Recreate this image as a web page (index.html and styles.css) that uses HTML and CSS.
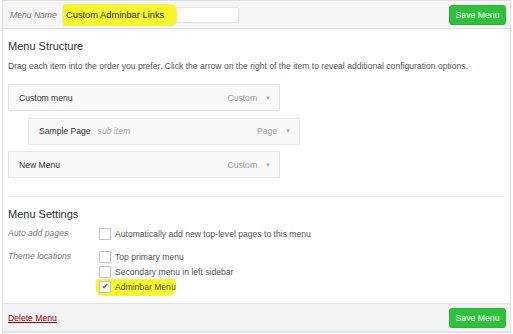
FILE: index.html
```html
<!DOCTYPE html>
<html lang="en">
<head>
<meta charset="UTF-8">
<meta name="viewport" content="width=device-width, initial-scale=1.0">
<title>Edit Menus</title>
<link rel="stylesheet" href="styles.css">
</head>
<body>

<div class="frame">
    <div class="header">
        <label class="name-label">Menu Name</label>
        <div class="name-input">
            <span class="marker">Custom Adminbar Links</span>
        </div>
        <button class="save">Save Menu</button>
    </div>

    <div class="body">
        <h3>Menu Structure</h3>
        <p class="desc">Drag each item into the order you prefer. Click the arrow on the right of the item to reveal additional configuration options.</p>

        <ul class="items">
            <li class="item">
                <span class="title">Custom menu</span>
                <span class="type">Custom</span>
                <span class="arrow">&#9660;</span>
            </li>
            <li class="item sub">
                <span class="title">Sample Page</span>
                <span class="subnote">sub item</span>
                <span class="type">Page</span>
                <span class="arrow">&#9660;</span>
            </li>
            <li class="item">
                <span class="title">New Menu</span>
                <span class="type">Custom</span>
                <span class="arrow">&#9660;</span>
            </li>
        </ul>

        <div class="settings">
            <h3>Menu Settings</h3>
            <div class="row">
                <div class="label">Auto add pages</div>
                <div class="opts">
                    <div class="opt"><span class="box"></span>Automatically add new top-level pages to this menu</div>
                </div>
            </div>
            <div class="row">
                <div class="label">Theme locations</div>
                <div class="opts">
                    <div class="opt"><span class="box"></span>Top primary menu</div>
                    <div class="opt"><span class="box"></span>Secondary menu in left sidebar</div>
                    <div class="opt marked"><span class="box checked">&#10004;</span>Adminbar Menu</div>
                </div>
            </div>
        </div>
    </div>

    <div class="footer">
        <a href="#" class="delete">Delete Menu</a>
        <button class="save">Save Menu</button>
    </div>
</div>

</body>
</html>
```

FILE: styles.css
```css
body {
    margin: 0;
    padding: 0;
    background: #fff;
    font-family: "Liberation Sans", Arial, sans-serif;
    font-size: 8.6px;
    color: #333;
}

.frame {
    box-sizing: border-box;
    width: 509px;
    height: 333px;
    margin-left: 2px;
    border: 1px solid #dfdfdf;
    border-bottom: 2px solid #dde4ea;
    display: flex;
    flex-direction: column;
}

.header {
    box-sizing: border-box;
    height: 28px;
    flex-shrink: 0;
    background: #f5f5f5;
    border-bottom: 1px solid #dfdfdf;
    display: flex;
    align-items: center;
    padding: 0 4px 0 7px;
}

.name-label {
    font-style: italic;
    color: #777;
    width: 52px;
    white-space: nowrap;
}

.name-input {
    box-sizing: border-box;
    width: 177px;
    height: 16px;
    background: #fff;
    border: 1px solid #e2e2e2;
    position: relative;
}

.marker {
    position: absolute;
    left: 0;
    top: -4px;
    height: 22px;
    line-height: 22px;
    padding: 0 13px 0 3px;
    background: #f5f532;
    border-radius: 3px 7px 6px 3px;
    font-size: 9.3px;
    color: #333;
    white-space: nowrap;
}

.save {
    margin-left: auto;
    background: #2fc13c;
    color: #fff;
    border: 1px solid #29b535;
    border-radius: 3px;
    font-family: "Liberation Sans", Arial, sans-serif;
    font-size: 8.7px;
    height: 20px;
    width: 57px;
    padding: 0;
}

.body {
    flex: 1;
    padding: 0 4px 0 5px;
}

h3 {
    font-weight: normal;
    font-size: 11px;
    line-height: 14px;
    color: #333;
    margin: 10px 0 0 0;
}

.desc {
    margin: 7px 0 0 0;
    line-height: 12px;
    color: #555;
    white-space: nowrap;
}

.items {
    list-style: none;
    margin: 12px 0 0 0;
    padding: 0;
}

.item {
    box-sizing: border-box;
    width: 272px;
    height: 27px;
    border: 1px solid #e6e6e6;
    background: #f9f9f9;
    display: flex;
    align-items: center;
    padding: 0 8px 0 10px;
    margin-bottom: 6.5px;
    color: #333;
}

.item.sub {
    margin-left: 20px;
}

.subnote {
    font-style: italic;
    color: #aaa;
    margin-left: 7px;
}

.type {
    margin-left: auto;
    color: #999;
}

.arrow {
    color: #aaa;
    font-size: 6px;
    margin-left: 8px;
}

.settings {
    border-top: 1px solid #eee;
    margin-top: 18px;
}

.settings h3 {
    margin-top: 10px;
}

.row {
    display: flex;
    margin-top: 5.5px;
}

.row + .row {
    margin-top: 8px;
}

.label {
    width: 91px;
    font-style: italic;
    color: #777;
    line-height: 13px;
}

.opt {
    display: flex;
    align-items: center;
    height: 15px;
    color: #555;
    white-space: nowrap;
}

.box {
    box-sizing: border-box;
    width: 12px;
    height: 12px;
    border: 1px solid #c4c4c4;
    background: #fff;
    margin-right: 4px;
    font-size: 8px;
    line-height: 10px;
    text-align: center;
    color: #3b7a1e;
}

.marked {
    background: #f5f532;
    margin-left: -3px;
    padding-left: 3px;
    width: 77px;
    height: 17px;
    margin-top: -1px;
    border-radius: 4px 2px 8px 6px;
}

.footer {
    box-sizing: border-box;
    height: 28px;
    flex-shrink: 0;
    background: #f3f3f3;
    border-top: 1px solid #dfdfdf;
    display: flex;
    align-items: center;
    padding: 0 4px 0 5px;
}

.delete {
    color: #a00;
    text-decoration: underline;
}
```
